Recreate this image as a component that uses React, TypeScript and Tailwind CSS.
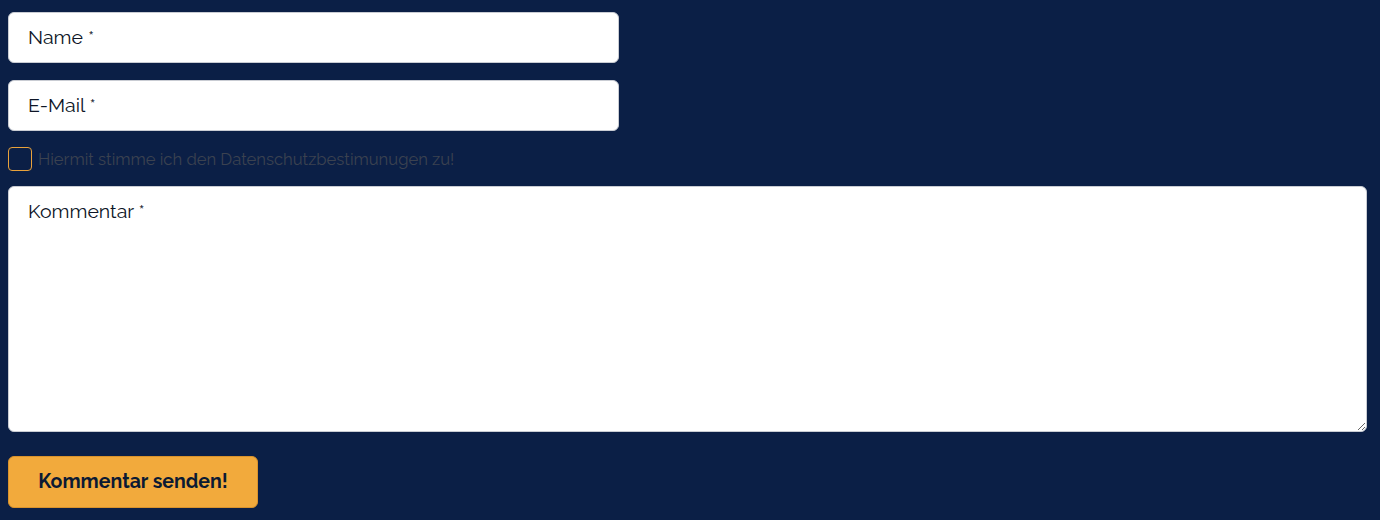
import React from "react";

export default function App() {
  const font = { fontFamily: "Raleway, Lato, 'Noto Sans', sans-serif" };
  return (
    <div className="min-h-[520px] w-full bg-[#0b1f46] pt-[12px] pl-[8px] pr-[13px]" style={font}>
      <form className="flex flex-col" onSubmit={(e) => e.preventDefault()}>
        <input
          type="text"
          placeholder="Name *"
          className="h-[51px] w-[611px] rounded-[6px] border border-[#c9ccd3] bg-white px-[19px] text-[19.5px] text-[#111827] placeholder:text-[#0d1526] outline-none"
        />
        <input
          type="email"
          placeholder="E-Mail *"
          className="mt-[17px] h-[51px] w-[611px] rounded-[6px] border border-[#c9ccd3] bg-white px-[19px] text-[19.5px] text-[#111827] placeholder:text-[#0d1526] outline-none"
        />
        <label className="mt-[16px] flex h-[24px] items-center gap-[6px]">
          <input
            type="checkbox"
            className="h-[24px] w-[24px] appearance-none rounded-[4px] border border-[#e9a23b] bg-transparent"
          />
          <span className="text-[16.6px] leading-[24px] text-[#3b4250]">Hiermit stimme ich den Datenschutzbestimunugen zu!</span>
        </label>
        <textarea
          placeholder="Kommentar *"
          className="mt-[15px] h-[246px] w-full rounded-[6px] border border-[#c9ccd3] bg-white px-[19px] pt-[10px] text-[19.5px] text-[#111827] placeholder:text-[#0d1526] outline-none"
        />
        <div className="mt-[24px]">
          <button
            type="submit"
            className="h-[52px] w-[250px] rounded-[6px] border border-[#d9922c] bg-[#f2aa3c] text-[19.5px] font-bold text-[#0b1a33]"
          >
            Kommentar senden!
          </button>
        </div>
      </form>
    </div>
  );
}
